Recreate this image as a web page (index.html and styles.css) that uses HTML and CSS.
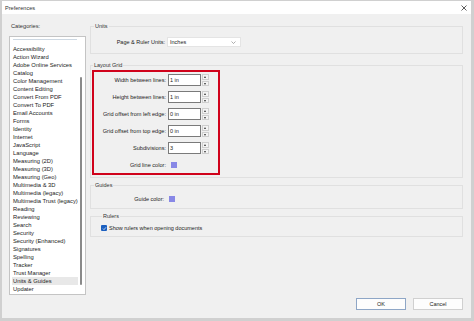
FILE: index.html
```html
<!DOCTYPE html>
<html>
<head>
<meta charset="utf-8">
<link rel="stylesheet" href="styles.css">
</head>
<body>
<div class="win">
  <div class="title">
    <span>Preferences</span>
    <svg class="close" width="6" height="6" viewBox="0 0 6 6"><path d="M0.5 0.5L5.5 5.5M5.5 0.5L0.5 5.5" stroke="#333" stroke-width="0.8"/></svg>
  </div>
  <div class="main">
    <div class="left">
      <div class="cat-label">Categories:</div>
      <div class="list">
        <div class="items">
          <div class="topbar"></div>
          <div class="item">Accessibility</div>
          <div class="item">Action Wizard</div>
          <div class="item">Adobe Online Services</div>
          <div class="item">Catalog</div>
          <div class="item">Color Management</div>
          <div class="item">Content Editing</div>
          <div class="item">Convert From PDF</div>
          <div class="item">Convert To PDF</div>
          <div class="item">Email Accounts</div>
          <div class="item">Forms</div>
          <div class="item">Identity</div>
          <div class="item">Internet</div>
          <div class="item">JavaScript</div>
          <div class="item">Language</div>
          <div class="item">Measuring (2D)</div>
          <div class="item">Measuring (3D)</div>
          <div class="item">Measuring (Geo)</div>
          <div class="item">Multimedia &amp; 3D</div>
          <div class="item">Multimedia (legacy)</div>
          <div class="item">Multimedia Trust (legacy)</div>
          <div class="item">Reading</div>
          <div class="item">Reviewing</div>
          <div class="item">Search</div>
          <div class="item">Security</div>
          <div class="item">Security (Enhanced)</div>
          <div class="item">Signatures</div>
          <div class="item">Spelling</div>
          <div class="item">Tracker</div>
          <div class="item">Trust Manager</div>
          <div class="item sel">Units &amp; Guides</div>
          <div class="item">Updater</div>
        </div>
        <div class="track"><div class="thumb"></div></div>
      </div>
    </div>
    <div class="right">
      <fieldset class="grp units">
        <legend>Units</legend>
        <div class="row">
          <span class="lbl">Page &amp; Ruler Units:</span>
          <div class="select"><span class="sel-text">Inches</span>
            <svg width="5" height="3" viewBox="0 0 5 3"><path d="M0.5 0.5L2.5 2.5L4.5 0.5" fill="none" stroke="#777" stroke-width="0.6"/></svg>
          </div>
        </div>
      </fieldset>
      <fieldset class="grp grid">
        <legend>Layout Grid</legend>
        <div class="redbox">
          <div class="row r">
            <span class="lbl">Width between lines:</span>
            <div class="input">1 in</div>
            <div class="spin"><span class="up"></span><span class="dn"></span></div>
          </div>
          <div class="row r">
            <span class="lbl">Height between lines:</span>
            <div class="input">1 in</div>
            <div class="spin"><span class="up"></span><span class="dn"></span></div>
          </div>
          <div class="row r">
            <span class="lbl">Grid offset from left edge:</span>
            <div class="input">0 in</div>
            <div class="spin"><span class="up"></span><span class="dn"></span></div>
          </div>
          <div class="row r">
            <span class="lbl">Grid offset from top edge:</span>
            <div class="input">0 in</div>
            <div class="spin"><span class="up"></span><span class="dn"></span></div>
          </div>
          <div class="row r">
            <span class="lbl">Subdivisions:</span>
            <div class="input">3</div>
            <div class="spin"><span class="up"></span><span class="dn"></span></div>
          </div>
          <div class="row r">
            <span class="lbl">Grid line color:</span>
            <div class="swatch"></div>
          </div>
        </div>
      </fieldset>
      <fieldset class="grp guides">
        <legend>Guides</legend>
        <div class="row g">
          <span class="lbl">Guide color:</span>
          <div class="swatch"></div>
        </div>
      </fieldset>
      <fieldset class="grp rulers">
        <legend>Rulers</legend>
        <div class="check-row">
          <span class="check"><svg width="5" height="5" viewBox="0 0 5 5"><path d="M1 2.6L2 3.6L4 1.3" fill="none" stroke="#fff" stroke-width="0.7"/></svg></span>
          <span>Show rulers when opening documents</span>
        </div>
      </fieldset>
    </div>
  </div>
  <div class="footer">
    <div class="btn ok">OK</div>
    <div class="btn">Cancel</div>
  </div>
</div>
</body>
</html>
```

FILE: styles.css
```css
* { box-sizing: border-box; }
html, body { margin: 0; padding: 0; }
body {
  font-family: "Liberation Sans", Arial, sans-serif;
  font-size: 5.5px;
  color: #222;
  background: #d2d2d2;
}
.win {
  width: 474px;
  height: 321px;
  border-style: solid;
  border-color: #d0d0d0;
  border-width: 1px 3px 3px 2px;
  background: #f0f0f0;
  display: flex;
  flex-direction: column;
}
.title {
  height: 13px;
  background: #fff;
  display: flex;
  align-items: center;
  justify-content: space-between;
  padding: 0 4px 0 3px;
  color: #333;
  font-size: 5.6px;
}
.main {
  display: flex;
  gap: 4px;
  padding: 8px 8px 0 7px;
}
.left { width: 77px; }
.cat-label { height: 8px; line-height: 8px; margin-left: 2px; margin-bottom: 6px; color: #333; font-size: 5.7px; }
.list {
  height: 259px;
  background: #fff;
  border: 1px solid #c4c4c4;
  display: flex;
}
.items { flex: 1; padding: 2px 0 0 2px; }
.topbar { height: 1px; background: #cdd8e2; margin: 0 1px 5px 1px; }
.item {
  height: 8px;
  line-height: 8px;
  padding-left: 1px;
  white-space: nowrap;
  color: #222;
  font-size: 5.8px;
}
.item.sel { background: #e8e8e8; }
.track { width: 8px; padding-top: 40px; display: flex; justify-content: center; }
.thumb { width: 2px; height: 208px; background: #8a8a8a; border-radius: 1px; }

.right { width: 373px; display: flex; flex-direction: column; }
.grp {
  margin: 0;
  padding: 0;
  border: 1px solid #e0e0e0;
  min-width: 0;
}
.grp legend {
  padding: 0 1px;
  margin-left: 1px;
  height: 8px;
  line-height: 8px;
  color: #333;
}
.row { display: flex; align-items: center; height: 12px; }
.lbl { width: 74px; text-align: right; padding-right: 2px; white-space: nowrap; color: #222; flex-shrink: 0; }
.units { padding: 6px 0 5px 2px; }
.select {
  width: 74px;
  height: 10px;
  background: #fff;
  border: 1px solid #e4e4e4;
  display: flex;
  align-items: center;
  justify-content: space-between;
  padding: 0 4px 0 2px;
}
.sel-text { white-space: nowrap; flex-shrink: 0; padding-right: 2px; }
.grid { margin-top: 7px; padding: 1px 0 2px 1px; }
.redbox {
  width: 128px;
  border: 2px solid #d0021b;
  padding: 2px 0 2px 0;
  display: flex;
  flex-direction: column;
  gap: 5px;
}
.row.r .lbl { width: 74px; font-size: 5.6px; }
.input {
  width: 33px;
  height: 12px;
  background: #fff;
  border: 1px solid #7a7a7a;
  line-height: 10px;
  padding-left: 1px;
}
.spin {
  width: 7px;
  height: 12px;
  margin-left: 1px;
  display: flex;
  flex-direction: column;
  gap: 1px;
}
.spin span {
  flex: 1;
  background: #f4f4f4;
  border: 1px solid #cfcfcf;
  position: relative;
}
.spin .up::after, .spin .dn::after {
  content: "";
  position: absolute;
  left: 1px;
  top: 1px;
  border-left: 1.5px solid transparent;
  border-right: 1.5px solid transparent;
}
.spin .up::after { border-bottom: 2px solid #333; }
.spin .dn::after { border-top: 2px solid #333; }
.swatch { width: 6px; height: 6px; background: #8888e6; margin-left: 3px; }
.guides { margin-top: 3px; padding: 4px 0 3px 2px; }
.guides .lbl { width: 73px; }
.rulers { margin-top: 3px; padding: 4px 0 4px 10px; }
.check-row { display: flex; align-items: center; gap: 2px; height: 8px; }
.check {
  width: 6px; height: 6px;
  background: #1b5fbf;
  border-radius: 1px;
  display: flex; align-items: center; justify-content: center;
}
.footer {
  display: flex;
  justify-content: flex-end;
  gap: 7px;
  padding: 3px 8px 0 0;
}
.btn {
  width: 50px;
  height: 12px;
  background: #fdfdfd;
  border: 1px solid #d0d0d0;
  display: flex; align-items: center; justify-content: center;
  color: #222;
}
.btn.ok { border-color: #8ea6c6; }
```
